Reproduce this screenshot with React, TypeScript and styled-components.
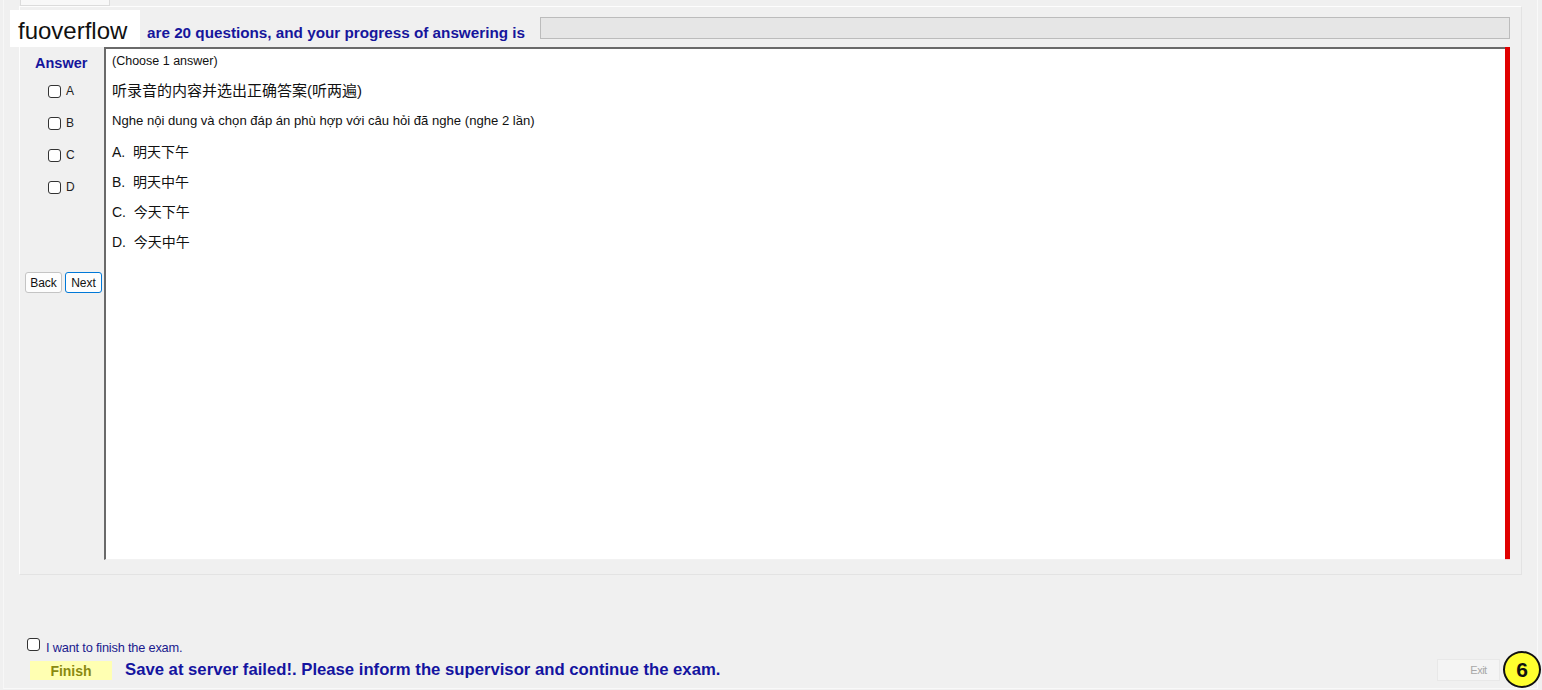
import React from 'react';
import styled, { createGlobalStyle } from 'styled-components';

const UI = '"Liberation Sans", Arial, "Noto Sans CJK SC", sans-serif';
const CJK = '"Liberation Sans", "Noto Sans CJK SC", sans-serif';

const GlobalStyle = createGlobalStyle`
  html, body {
    margin: 0;
    padding: 0;
    background: #f0f0f0;
  }
  body {
    font-family: ${UI};
    overflow: hidden;
  }
`;

const Window = styled.div`
  position: relative;
  width: 1542px;
  height: 690px;
  background: #f0f0f0;
  box-sizing: border-box;
  padding: 0 4px 0 3px;
`;

const Frame = styled.div`
  height: 688px;
  border-left: 1px solid #f7f7f7;
  border-right: 1px solid #f9f9f9;
  border-bottom: 1px solid #f9f9f9;
  display: flex;
  flex-direction: column;
`;

const TabStrip = styled.div`
  height: 6px;
  padding-left: 16px;
  display: flex;
`;

const Tab = styled.div`
  width: 90px;
  height: 6px;
  background: #f8f8f8;
  border: 1px solid #dcdcdc;
  border-top: none;
  box-sizing: border-box;
`;

const TabPanel = styled.div`
  margin-left: 15px;
  width: 1503px;
  height: 571px;
  box-sizing: border-box;
  border: 1px solid #fdfdfd;
  border-right-color: #e3e3e3;
  border-bottom-color: #e3e3e3;
  padding: 0 11px 14px 0;
  display: flex;
  flex-direction: column;
`;

const HeaderRow = styled.div`
  height: 40px;
  display: flex;
  align-items: center;
  padding-left: 127px;
  gap: 15px;
`;

const HeaderText = styled.span`
  font-family: ${UI};
  font-weight: bold;
  font-size: 15.25px;
  color: #16169c;
  white-space: nowrap;
  margin-top: 10px;
`;

const ProgressBar = styled.div`
  flex: 1;
  height: 22px;
  box-sizing: border-box;
  background: #e6e6e6;
  border: 1px solid #bcbcbc;
  margin-top: 2px;
`;

const Body = styled.div`
  flex: 1;
  display: grid;
  grid-template-columns: 84px 1fr;
`;

const LeftCol = styled.div`
  display: flex;
  flex-direction: column;
  padding-top: 5px;
`;

const AnswerTitle = styled.div`
  height: 23px;
  line-height: 23px;
  padding-left: 15px;
  font-weight: bold;
  font-size: 14.5px;
  color: #16169c;
`;

const ChoiceRow = styled.label`
  height: 32px;
  display: flex;
  align-items: center;
  gap: 5px;
  padding-left: 28px;
  font-size: 12px;
  color: #222;
`;

const Box = styled.input.attrs({ type: 'checkbox' })`
  appearance: none;
  margin: 0;
  width: 13px;
  height: 13px;
  box-sizing: border-box;
  border: 1px solid #333;
  border-radius: 3px;
  background: #fff;
`;

const NavRow = styled.div`
  margin-top: 69px;
  padding-left: 5px;
  display: flex;
  gap: 3px;
`;

const NavButton = styled.button<{ $focused?: boolean }>`
  height: 21px;
  width: 37px;
  padding: 0;
  font-family: ${UI};
  font-size: 12px;
  color: #111;
  background: #fdfdfd;
  border: 1px solid ${(p) => (p.$focused ? '#0078d7' : '#c4c4c4')};
  border-radius: 3px;
`;

const ContentWrap = styled.div`
  display: flex;
`;

const Content = styled.div`
  flex: 1;
  background: #fff;
  border-left: 2px solid #6a6a6a;
  border-top: 2px solid #6a6a6a;
  border-bottom: 1px solid #f2f2f2;
  display: flex;
  flex-direction: column;
  padding-left: 6px;
`;

const Line = styled.div<{ $h: number; $cjk?: boolean; $size?: number }>`
  height: ${(p) => p.$h}px;
  display: flex;
  align-items: center;
  font-family: ${(p) => (p.$cjk ? CJK : UI)};
  font-size: ${(p) => p.$size ?? 12.5}px;
  color: #111;
  white-space: pre;
`;

const RedBar = styled.div`
  width: 5px;
  background: #e00000;
  border-bottom: 1px solid #f0d0d0;
`;

const Footer = styled.div`
  flex: 1;
  display: flex;
  flex-direction: column;
  padding-top: 63px;
`;

const FinishCheckRow = styled.label`
  height: 13px;
  display: flex;
  align-items: center;
  gap: 6px;
  padding-left: 23px;
  font-size: 12.8px;
  color: #1a1a8e;
  letter-spacing: -0.2px;
`;

const CheckLabel = styled.span`
  margin-top: 5px;
`;

const FinishRow = styled.div`
  height: 37px;
  display: flex;
  align-items: center;
  padding-left: 26px;
`;

const FinishButton = styled.div`
  width: 82px;
  height: 19px;
  margin-top: 1px;
  background: #ffffb2;
  display: flex;
  align-items: center;
  justify-content: center;
  font-weight: bold;
  font-size: 14px;
  color: #8a8a10;
  padding-top: 2px;
  box-sizing: border-box;
`;

const Message = styled.span`
  margin-left: 13px;
  font-weight: bold;
  font-size: 16.7px;
  color: #1414a0;
  white-space: nowrap;
`;

const Spacer = styled.div`
  flex: 1;
`;

const ExitButton = styled.button`
  width: 63px;
  height: 22px;
  padding: 0 0 0 20px;
  background: #f4f4f4;
  border: 1px solid #e8e8e8;
  font-family: ${UI};
  font-size: 11px;
  color: #a8a8a8;
  letter-spacing: -0.5px;
`;

const Badge = styled.div`
  width: 38px;
  height: 37px;
  margin-left: 3px;
  margin-right: -4px;
  box-sizing: border-box;
  border: 2px solid #111;
  border-radius: 50%;
  background: #ffff2e;
  display: flex;
  align-items: center;
  justify-content: center;
  font-weight: bold;
  font-size: 21px;
  color: #111;
`;

const Watermark = styled.div`
  position: absolute;
  left: 10px;
  top: 10px;
  width: 130px;
  height: 37px;
  background: #fff;
  box-sizing: border-box;
  padding: 5px 0 0 8px;
  display: flex;
  align-items: center;
  font-family: ${UI};
  font-size: 24px;
  color: #111;
`;

const choices = ['A', 'B', 'C', 'D'];
const options = ['A.  明天下午', 'B.  明天中午', 'C.  今天下午', 'D.  今天中午'];

export default function App() {
  return (
    <>
      <GlobalStyle />
      <Window>
        <Frame>
          <TabStrip>
            <Tab />
          </TabStrip>
          <TabPanel>
            <HeaderRow>
              <HeaderText>are 20 questions, and your progress of answering is</HeaderText>
              <ProgressBar />
            </HeaderRow>
            <Body>
              <LeftCol>
                <AnswerTitle>Answer</AnswerTitle>
                {choices.map((c) => (
                  <ChoiceRow key={c}>
                    <Box />
                    {c}
                  </ChoiceRow>
                ))}
                <NavRow>
                  <NavButton>Back</NavButton>
                  <NavButton $focused>Next</NavButton>
                </NavRow>
              </LeftCol>
              <ContentWrap>
                <Content>
                  <Line $h={24}>(Choose 1 answer)</Line>
                  <Line $h={32} $cjk $size={15}>
                    听录音的内容并选出正确答案(听两遍)
                  </Line>
                  <Line $h={31} $size={13.1}>
                    Nghe nội dung và chọn đáp án phù hợp với câu hỏi đã nghe (nghe 2 lần)
                  </Line>
                  {options.map((o) => (
                    <Line key={o} $h={30} $cjk $size={14}>
                      {o}
                    </Line>
                  ))}
                </Content>
                <RedBar />
              </ContentWrap>
            </Body>
          </TabPanel>
          <Footer>
            <FinishCheckRow>
              <Box />
              <CheckLabel>I want to finish the exam.</CheckLabel>
            </FinishCheckRow>
            <FinishRow>
              <FinishButton>Finish</FinishButton>
              <Message>Save at server failed!. Please inform the supervisor and continue the exam.</Message>
              <Spacer />
              <ExitButton>Exit</ExitButton>
              <Badge>6</Badge>
            </FinishRow>
          </Footer>
        </Frame>
        <Watermark>fuoverflow</Watermark>
      </Window>
    </>
  );
}
